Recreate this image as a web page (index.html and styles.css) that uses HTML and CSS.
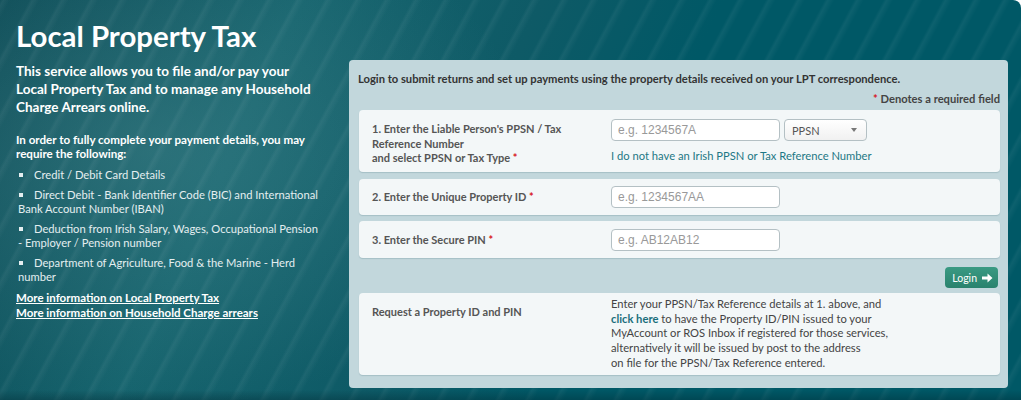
FILE: index.html
```html
<!DOCTYPE html>
<html lang="en">
<head>
<meta charset="utf-8">
<title>Local Property Tax</title>
<link rel="stylesheet" href="styles.css">
</head>
<body>
<div class="page">
  <div class="left">
    <h1 class="title">Local Property Tax</h1>
    <p class="intro">This service allows you to file and/or pay your Local Property Tax and to manage any Household Charge Arrears online.</p>
    <p class="need">In order to fully complete your payment details, you may require the following:</p>
    <ul class="bullets">
      <li>Credit / Debit Card Details</li>
      <li>Direct Debit - Bank Identifier Code (BIC) and International Bank Account Number (IBAN)</li>
      <li>Deduction from Irish Salary, Wages, Occupational Pension - Employer / Pension number</li>
      <li>Department of Agriculture, Food &amp; the Marine - Herd number</li>
    </ul>
    <div class="links">
      <a href="#">More information on Local Property Tax</a>
      <a href="#">More information on Household Charge arrears</a>
    </div>
  </div>
  <div class="panel">
    <p class="lead">Login to submit returns and set up payments using the property details received on your LPT correspondence.</p>
    <p class="reqnote"><span class="star">*</span> Denotes a required field</p>
    <div class="card card-1">
      <div class="label label-1">1. Enter the Liable Person's PPSN / Tax Reference Number<br>and select PPSN or Tax Type <span class="star">*</span></div>
      <div class="fields">
        <div class="row">
          <input class="input" type="text" placeholder="e.g. 1234567A">
          <div class="select"><span>PPSN</span><span class="caret"></span></div>
        </div>
        <a class="nolink" href="#">I do not have an Irish PPSN or Tax Reference Number</a>
      </div>
    </div>
    <div class="card card-2">
      <div class="label">2. Enter the Unique Property ID <span class="star">*</span></div>
      <div class="fields"><input class="input" type="text" placeholder="e.g. 1234567AA"></div>
    </div>
    <div class="card card-3">
      <div class="label">3. Enter the Secure PIN <span class="star">*</span></div>
      <div class="fields"><input class="input" type="text" placeholder="e.g. AB12AB12"></div>
    </div>
    <div class="actions">
      <button class="login" type="button">Login <svg class="arrow" width="11" height="10" viewBox="0 0 11 10"><path d="M0 3.5h5.5V0.5L10.5 5 5.5 9.5V6.5H0z" fill="#fff"/></svg></button>
    </div>
    <div class="card card-4">
      <div class="label label-4">Request a Property ID and PIN</div>
      <div class="info">Enter your PPSN/Tax Reference details at 1. above, and <a href="#" class="here">click here</a> to have the Property ID/PIN issued to your MyAccount or ROS Inbox if registered for those services, alternatively it will be issued by post to the address<br>on file for the PPSN/Tax Reference entered.</div>
    </div>
  </div>
</div>
</body>
</html>
```
FILE: styles.css
```css
* { box-sizing: border-box; }
html, body { margin: 0; padding: 0; background: #ffffff; }
body { font-family: Lato, "Open Sans", sans-serif; width: 1024px; height: 400px; overflow: hidden; }

.page {
  width: 1021px;
  height: 400px;
  border-top-right-radius: 8px;
  display: flex;
  align-items: flex-start;
  background:
    linear-gradient(to bottom, rgba(0,0,0,0) 390px, rgba(0,40,50,0.35) 400px),
    repeating-linear-gradient(118deg, rgba(255,255,255,0) 0px, rgba(255,255,255,0.05) 3px, rgba(255,255,255,0) 9px, rgba(255,255,255,0) 26px),
    radial-gradient(ellipse 380px 260px at 150px 150px, rgba(90,150,155,0.35), rgba(90,150,155,0) 100%),
    linear-gradient(115deg, #0b4a55 0%, #15636d 25%, #0e5a66 45%, #005866 60%, #005866 100%);
}

.left { width: 349px; padding: 19px 0 0 16px; color: #fff; }
.title { margin: 0; font-size: 29.4px; font-weight: 700; line-height: 34px; }
.intro { margin: 9px 0 0; font-size: 13.5px; font-weight: 700; line-height: 18px; width: 302px; }
.need { margin: 17px 0 0; font-size: 11.6px; font-weight: 700; line-height: 14px; width: 312px; }
.bullets { list-style: none; margin: 7px 0 0; padding: 0; width: 306px; color: #e4eef0; font-size: 11.2px; line-height: 14.5px; }
.bullets li { margin: 0 0 5px 2px; }
.bullets li::before { content: ""; display: inline-block; width: 4px; height: 4px; background: #e4eef0; margin: 0 11px 2px 1px; vertical-align: middle; }
.links { display: flex; flex-direction: column; margin-top: 2px; }
.links a { color: #fff; font-size: 11.5px; font-weight: 700; line-height: 15px; text-decoration: underline; }

.panel {
  margin-top: 60px;
  width: 659px;
  height: 328px;
  background: #c2d7dc;
  border-radius: 4px;
  padding: 12px 8px 12px 10px;
  color: #333;
}
.lead { margin: 0 0 0 -1px; font-size: 11.2px; font-weight: 700; line-height: 14px; color: #333; }
.reqnote { margin: 6px 0 4px; text-align: right; font-size: 11.2px; font-weight: 700; line-height: 14px; color: #444; }
.star { color: #d7141d; font-weight: 700; }

.card {
  display: flex;
  align-items: center;
  background: #f3f7f8;
  border-radius: 4px;
  padding: 7px 13px;
  margin-bottom: 6px;
  box-shadow: 0 1px 1px rgba(80,120,130,0.25);
}
.card-1 { align-items: flex-start; padding-top: 9px; padding-bottom: 6.5px; margin-bottom: 7px; }
.label-1 { margin-top: 3px; }
.card-3 { padding-top: 8px; }
.label { width: 239px; font-size: 11px; font-weight: 700; line-height: 14.5px; color: #555; }
.fields { display: flex; flex-direction: column; }
.row { display: flex; gap: 4px; }
.input {
  width: 169px; height: 22px;
  border: 1px solid #b4c0c4; border-radius: 4px; background: #fff;
  padding: 0 6px; font-family: "Liberation Sans", Arial, sans-serif; font-size: 12px; color: #555;
}
.input::placeholder { color: #999; }
.select {
  width: 83px; height: 22px; display: flex; align-items: center; justify-content: space-between;
  border: 1px solid #b4c0c4; border-radius: 4px; background: linear-gradient(#fff, #f1f1f1);
  padding: 0 9px 0 7px; font-size: 11px; color: #555;
}
.caret { width: 0; height: 0; border-left: 3px solid transparent; border-right: 3px solid transparent; border-top: 4px solid #777; }
.nolink { margin-top: 8px; font-size: 11.2px; line-height: 14px; color: #1e7785; text-decoration: none; }

.actions { display: flex; justify-content: flex-end; margin: 9px 2px 5px 0; }
.login {
  display: flex; align-items: center; gap: 5px;
  height: 21px; padding: 0 5px 0 7px;
  border: 0; border-radius: 4px;
  background: linear-gradient(#3a9a83, #2a826d);
  color: #fff; font-family: Lato, "Open Sans", sans-serif; font-size: 10.5px;
}
.arrow { display: block; }

.card-4 { align-items: flex-start; padding: 4px 13px 4px 13px; margin-bottom: 0; }
.label-4 { padding-top: 8px; font-weight: 700; color: #555; }
.info { width: 295px; font-size: 11.2px; line-height: 14.7px; color: #444; }
.here { color: #1a6f7c; font-weight: 700; text-decoration: none; }
```
